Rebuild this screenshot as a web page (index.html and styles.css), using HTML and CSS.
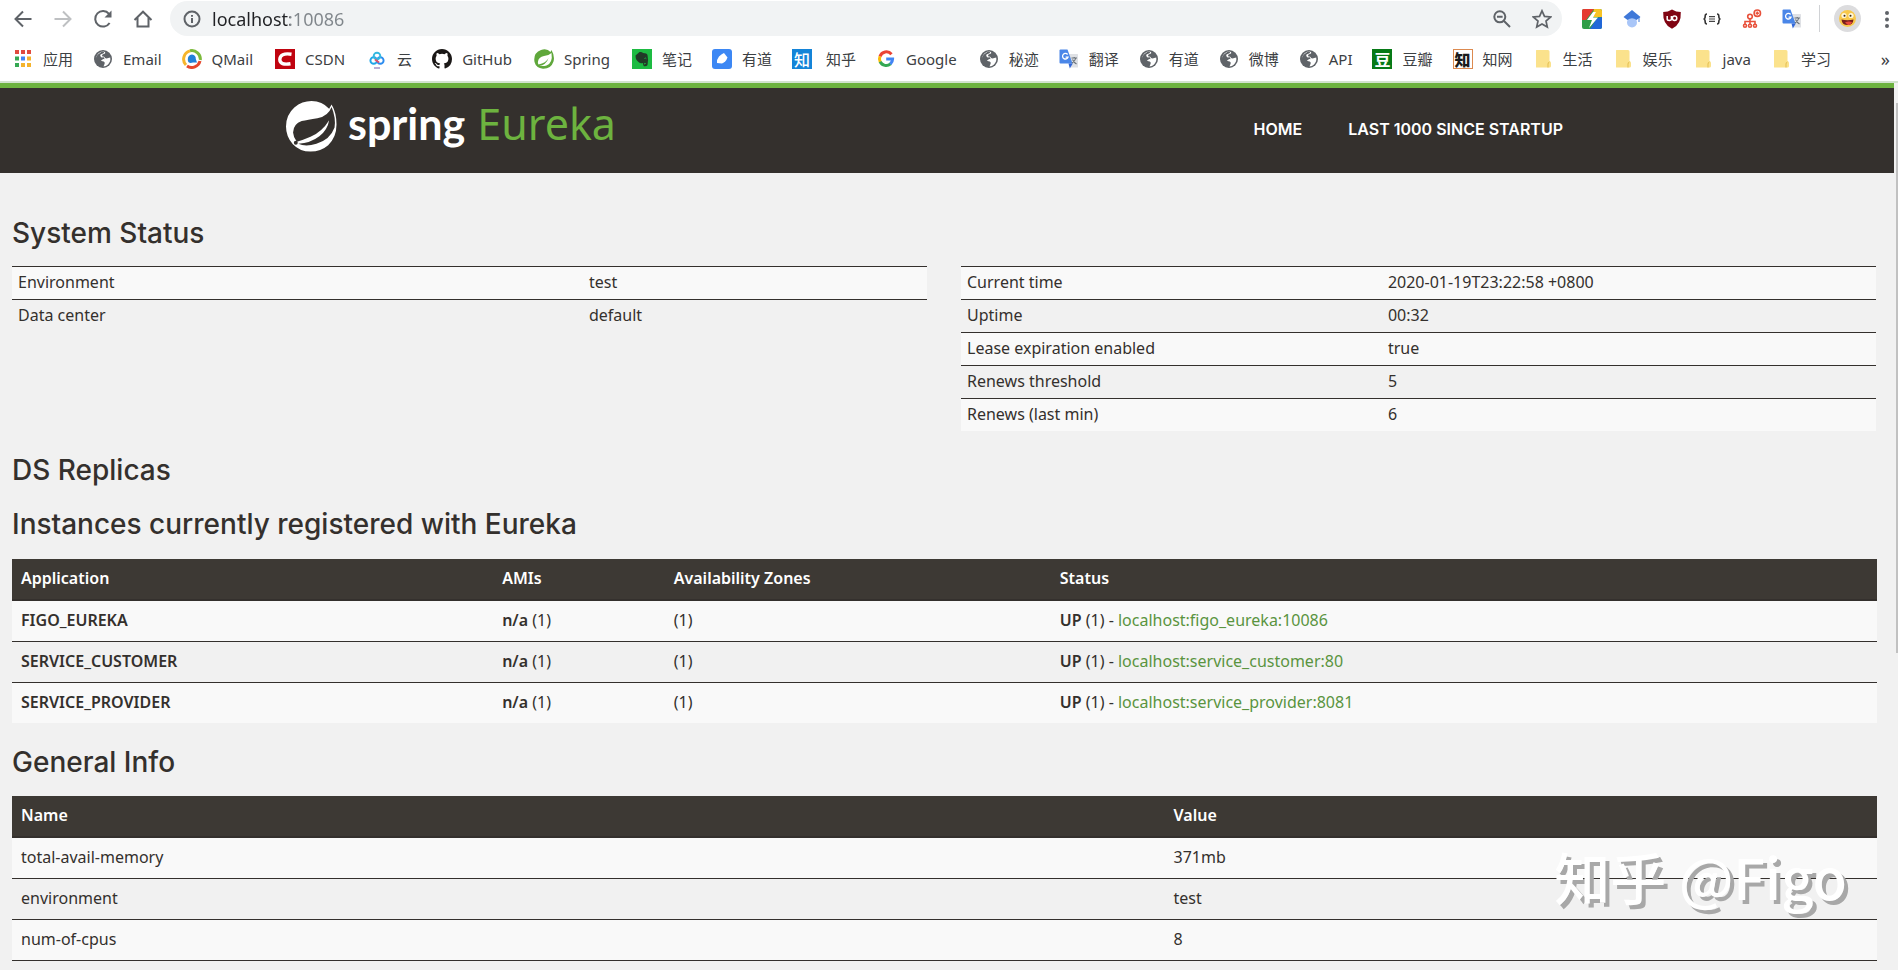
FILE: index.html
```html
<!DOCTYPE html>
<html lang="en">
<head>
<meta charset="utf-8">
<title>Eureka</title>
<link rel="stylesheet" href="styles.css">
</head>
<body>
<svg class="defs" aria-hidden="true">
  <symbol id="globe" viewBox="0 0 20 20"><circle cx="10" cy="10" r="9" fill="#5f6368"/><path d="M4 6.500Q6 2.800 10 2.500Q13 2.800 12 4.500L9.500 5.500Q8.500 6.500 9.500 7.500Q12 7 12 9Q13.500 10 17.200 8.600Q18 12.500 15 15.500Q13 17.500 10.500 17.500L11.500 15Q12.500 12.600 9.500 12.200Q7.500 12 7.800 10.200Q6 9 2.800 9Z" fill="#fff"/><path d="M2.800 9.500Q3 8 4.600 5.800L9 2.600Q12 3 10.600 4.200L7.500 5.600Q6.300 7.300 8.600 8.600L11 8.200L11.500 10.200Q9.500 9.800 9 11.200Q6 11.500 5 10.300Z" fill="#5f6368"/></symbol>
  <symbol id="folder" viewBox="0 0 20 20"><path d="M3 1.500Q3 1 3.500 1H15q1.500 0 1.500 1.500V12q1.500.500 1.500 2v3q0 1-1 1.500H3.500Q3 18.500 3 18Z" fill="#fbe28c"/><path d="M15 18.500V15q0-1.600 1.400-2" fill="none" stroke="#e3bd4e"/></symbol>
  <symbol id="translate" viewBox="0 0 20 20"><path d="M8 5h10.500q.500 0 .500.500V18q0 .500-.500.500H12Z" fill="#dfe1e5"/><path d="M1.500.500H8.500l5 14H1.500Q.500 14.500.500 13.500V1.500Q.500.500 1.500.500Z" fill="#4a86e8"/><path d="M9.500 14.500h4.300l-3 5Z" fill="#3367d6"/><path d="M8.600 5.500A2.800 2.800 0 1 0 9 8.200H6.600" fill="none" stroke="#fff" stroke-width="1.300"/><path d="M12.500 9H18M15.200 8V9M16.800 9Q16 12.500 13 14M13.500 10.500Q15 13.500 17.500 15" fill="none" stroke="#687078" stroke-width="1.100"/></symbol>
</svg>

<div class="browser">
  <div class="toolbar">
    <button class="tool" type="button" aria-label="Back"><svg viewBox="0 0 20 20"><path d="M18.500 10H3M10 2.500L2.500 10L10 17.500" class="ink"/></svg></button>
    <button class="tool tool-off" type="button" aria-label="Forward"><svg viewBox="0 0 20 20"><path d="M1.500 10H17M10 2.500L17.500 10L10 17.500" class="ink"/></svg></button>
    <button class="tool" type="button" aria-label="Reload"><svg viewBox="0 0 20 20"><path d="M16.600 14A7.800 7.800 0 1 1 16 4.800" class="ink"/><path d="M18.500 1.500V8.500H11.500Z" fill="#5f6368"/></svg></button>
    <button class="tool" type="button" aria-label="Home"><svg viewBox="0 0 20 20"><path d="M1.500 11L10 2.700L18.500 11M4.500 8.500V17.500H15.500V8.500" class="ink"/></svg></button>
    <div class="omnibox">
      <svg class="info" viewBox="0 0 20 20" aria-hidden="true"><circle cx="10" cy="10" r="7.500" class="ink"/><path d="M10 9V14M10 6V7.800" class="ink"/></svg>
      <input class="address" type="text" value="localhost:10086" aria-label="Address">
      <button class="tool" type="button" aria-label="Zoom"><svg viewBox="0 0 20 20"><circle cx="7.800" cy="7.800" r="5.500" class="ink"/><path d="M12 12L18 18M5 7.800H10.600" class="ink"/></svg></button>
      <button class="tool" type="button" aria-label="Bookmark"><svg viewBox="0 0 20 20"><path d="M10 1.800L12.500 7.400L18.600 8L14 12L15.300 18L10 14.900L4.700 18L6 12L1.400 8L7.500 7.400Z" fill="none" stroke="#5f6368" stroke-width="1.700"/></svg></button>
    </div>
    <div class="extensions">
      <button class="tool" type="button" aria-label="Lightning"><svg viewBox="0 0 20 20"><rect width="20" height="20" rx="2" fill="#2f9e48"/><path d="M0 11V2Q0 0 2 0H12L4 11Z" fill="#e53a30"/><path d="M12 0H18Q20 0 20 2V8H10Z" fill="#f7c325"/><path d="M20 8V18Q20 20 18 20H8L15 9Z" fill="#2167d8"/><path d="M11 3L5 11H10L7 19L16 8.500H11L14 3Z" fill="#fff"/></svg></button>
      <button class="tool" type="button" aria-label="Scholar"><svg viewBox="0 0 20 20"><circle cx="10" cy="13.500" r="5" fill="#a9c6f8"/><path d="M10 1L18.500 8L14.500 11Q10 7.500 5.500 11L1.500 8Z" fill="#3f78d8"/><path d="M17 8V13" stroke="#3f78d8"/></svg></button>
      <button class="tool" type="button" aria-label="Shield"><svg viewBox="0 0 20 20"><path d="M10 .500Q14 3 18.800 3Q19.500 15.500 10 19.800Q.500 15.500 1.200 3Q6 3 10 .500Z" fill="#800412"/><path d="M5.200 7V10.300Q5.200 11.500 7.300 11.500T9.400 10.300V7" fill="none" stroke="#fff" stroke-width="1.500"/><circle cx="12.600" cy="9.200" r="2.200" fill="none" stroke="#fff" stroke-width="1.500"/></svg></button>
      <button class="tool" type="button" aria-label="JSON"><svg viewBox="0 0 20 20"><path d="M5 5Q3.200 5 3.200 7Q3.200 10 1.500 10Q3.200 10 3.200 13Q3.200 15 5 15M15 5Q16.800 5 16.800 7Q16.800 10 18.500 10Q16.800 10 16.800 13Q16.800 15 15 15" fill="none" stroke="#333" stroke-width="1.600"/><path d="M7 7.700H13M7 10H13M7 12.300H13" stroke="#444" stroke-width="1.200"/></svg></button>
      <button class="tool" type="button" aria-label="Sitemap"><svg viewBox="0 0 20 20"><g fill="none" stroke="#e8503a" stroke-width="1.600"><circle cx="8" cy="7.500" r="2.300"/><path d="M8 10V15M3 15V12.500H13V15"/><circle cx="3" cy="16.700" r="1.500"/><circle cx="8" cy="16.700" r="1.500"/><circle cx="13" cy="16.700" r="1.500"/><circle cx="15.300" cy="4.200" r="3.200"/><path d="M15.300 2.600V5.800M13.700 4.200H16.900"/></g></svg></button>
      <button class="tool" type="button" aria-label="Translate"><svg><use href="#translate"/></svg></button>
    </div>
    <button class="avatar" type="button" aria-label="Profile"><svg viewBox="0 0 27 27"><circle cx="13.500" cy="13.500" r="13.500" fill="#dcdcde"/><circle cx="13.500" cy="13.500" r="8.500" fill="#f8c84b"/><circle cx="10" cy="10.500" r="2.600" fill="#fff6d8"/><circle cx="17" cy="10.500" r="2.600" fill="#fff6d8"/><circle cx="10.500" cy="10.800" r="1" fill="#3b2a1a"/><circle cx="16.500" cy="10.800" r="1" fill="#3b2a1a"/><path d="M7.500 14.500Q13.500 16 19.500 14.500Q19 20 13.500 20T7.500 14.500Z" fill="#7a1f1c"/><path d="M11 17.500Q14 16 18 17Q17 20.500 14 20Z" fill="#e8483c"/></svg></button>
    <button class="menu" type="button" aria-label="Menu"><svg viewBox="0 0 6 20"><g fill="#5f6368"><circle cx="3" cy="4" r="2"/><circle cx="3" cy="10.500" r="2"/><circle cx="3" cy="17" r="2"/></g></svg></button>
  </div>

  <nav class="bookmarks" aria-label="Bookmarks">
    <a class="mark" href="#"><svg viewBox="0 0 20 20"><path d="M2 1h4v4h-4zM8 1h4v4h-4zM14 1h4v4h-4z" fill="#e04a3f"/><path d="M2 7.500h4v4h-4z" fill="#35a853"/><path d="M8 7.500h4v4h-4z" fill="#4285f4"/><path d="M14 7.500h4v4h-4zM14 14h4v4h-4zM8 14h4v4h-4z" fill="#f4b32c"/><path d="M2 14h4v4h-4z" fill="#35a853"/></svg>应用</a>
    <a class="mark" href="#"><svg><use href="#globe"/></svg>Email</a>
    <a class="mark mark-latin" href="#"><svg viewBox="0 0 20 20"><g fill="none" stroke-width="3"><path d="M8 1.800A8.500 8.500 0 0 1 18.300 11" stroke="#7cba3b"/><path d="M18 12A8.500 8.500 0 0 1 5 17" stroke="#e5472d"/><path d="M4 16A8.500 8.500 0 0 1 8 1.900" stroke="#f6b52c"/></g><path d="M10 5.500Q14 6 13.800 10L15 13.500H11Q6 15 5.800 11Q5.500 6 10 5.500Z" fill="#2180d8"/></svg>QMail</a>
    <a class="mark mark-latin" href="#"><svg viewBox="0 0 20 20"><path d="M0 0H20V20H0Z" fill="#c00410"/><path d="M16.500 5.200Q5 3.500 4.800 10.500Q5 16.500 15.500 14.700" fill="none" stroke="#fff" stroke-width="3.400"/></svg>CSDN</a>
    <a class="mark" href="#"><svg viewBox="0 0 20 20"><g fill="none" stroke-width="1.900"><circle cx="6.700" cy="11.500" r="3.300" stroke="#20a6e8"/><circle cx="13.300" cy="11.500" r="3.300" stroke="#2b8cf0"/><circle cx="10" cy="7" r="3.300" stroke="#35b8e0"/><path d="M8 10.500L12 13.500" stroke="#e0506a"/><path d="M7 19H13" stroke="#8a7ab8" stroke-width="1.200"/></g></svg>云</a>
    <a class="mark mark-latin" href="#"><svg viewBox="0 0 16 16"><path fill="#1b1817" d="M8 0C3.580 0 0 3.580 0 8c0 3.540 2.290 6.530 5.470 7.590.4.070.55-.17.55-.38 0-.19-.01-.82-.01-1.490-2.010.37-2.530-.49-2.690-.94-.09-.23-.48-.94-.82-1.130-.28-.15-.68-.52-.01-.53.63-.01 1.080.58 1.230.82.72 1.210 1.870.87 2.330.66.07-.52.28-.87.51-1.070-1.780-.2-3.640-.89-3.640-3.950 0-.87.31-1.590.82-2.150-.08-.2-.36-1.020.08-2.120 0 0 .67-.21 2.200.82a7.600 7.600 0 0 1 4 0c1.530-1.040 2.200-.82 2.200-.82.44 1.100.16 1.920.08 2.120.51.56.82 1.270.82 2.150 0 3.070-1.870 3.750-3.650 3.950.29.25.54.73.54 1.480 0 1.070-.01 1.930-.01 2.200 0 .21.15.46.55.38A8 8 0 0 0 16 8c0-4.420-3.580-8-8-8Z"/></svg>GitHub</a>
    <a class="mark mark-latin" href="#"><svg viewBox="0 0 20 20"><path d="M17.500 1Q21 7 19.500 12.500Q17 20 9 19.800Q2 19 .500 13Q-1 4 7 1Q13-1 16.500 3Z" fill="#5fa73b"/><path d="M17.500 4Q15 6.500 10 7Q4.500 8 4 12.500Q3.500 14 4.500 15.500Q7 18 12.500 16.500Q19 14 17.500 4Z" fill="#fff"/><path d="M4.500 15.500Q12 14 14.500 9Q12.500 16 4.500 17Z" fill="#5fa73b"/></svg>Spring</a>
    <a class="mark" href="#"><svg viewBox="0 0 20 20"><path d="M0 0H20V20H0Z" fill="#1dbb42"/><path d="M3.500 6.500L7.500 3Q10 2.500 11 4Q15 4 15.500 6Q16.500 10 15.500 16Q15 17.500 12 17.300Q10.500 16 11 14Q8.500 15 6.500 13Q3.500 11 3.500 6.500Z" fill="#223a28"/><path d="M12.500 9.500Q13.500 8.500 14.300 9.700M13.700 14.500Q12 13.800 12.200 15.500" fill="none" stroke="#1dbb42"/></svg>笔记</a>
    <a class="mark" href="#"><svg viewBox="0 0 20 20"><rect width="20" height="20" rx="3" fill="#3c87f4"/><path d="M5 14Q4.500 10.500 7 7.500Q10 4.500 12 4L15.500 8.500Q14 13 10 14.500Z" fill="#fff"/></svg>有道</a>
    <a class="mark mark-wide" href="#"><span class="tile tile-blue" aria-hidden="true">知</span>知乎</a>
    <a class="mark mark-latin" href="#"><svg viewBox="0 0 20 20"><g fill="none" stroke-width="3"><path d="M15.500 5.200A6.700 6.700 0 0 0 4 7.500" stroke="#ea4335"/><path d="M4 7.300A6.700 6.700 0 0 0 4.200 13" stroke="#fbbc05"/><path d="M4.100 12.800A6.700 6.700 0 0 0 14.500 14.800" stroke="#34a853"/><path d="M14.300 15A6.700 6.700 0 0 0 16.600 10H10.200" stroke="#4285f4"/></g></svg>Google</a>
    <a class="mark" href="#"><svg><use href="#globe"/></svg>秘迹</a>
    <a class="mark" href="#"><svg><use href="#translate"/></svg>翻译</a>
    <a class="mark" href="#"><svg><use href="#globe"/></svg>有道</a>
    <a class="mark" href="#"><svg><use href="#globe"/></svg>微博</a>
    <a class="mark" href="#"><svg><use href="#globe"/></svg>API</a>
    <a class="mark" href="#"><span class="tile tile-green" aria-hidden="true">豆</span>豆瓣</a>
    <a class="mark" href="#"><span class="tile tile-orange" aria-hidden="true">知</span>知网</a>
    <a class="mark" href="#"><svg><use href="#folder"/></svg>生活</a>
    <a class="mark" href="#"><svg><use href="#folder"/></svg>娱乐</a>
    <a class="mark" href="#"><svg><use href="#folder"/></svg>java</a>
    <a class="mark" href="#"><svg><use href="#folder"/></svg>学习</a>
    <button class="more" type="button" aria-label="More bookmarks">»</button>
  </nav>
</div>

<div class="page">
  <header class="header">
    <div class="header-inner">
      <a class="brand" href="#">
        <svg viewBox="0 0 52 52" aria-hidden="true"><path d="M46.500 3.500Q51.500 12 51.500 24Q51.500 37 43 45Q35.500 51.500 25 51.500Q14 51.500 7 44Q0 36.500 0 26Q0 14 8.500 6.500Q16.500 0 26 0Q37 0 44 8Z" fill="#fff"/><path d="M46.500 6Q43 15.500 32 17.500Q22 19 16 20.500Q7.500 23.500 7.200 32Q7.500 37 11 41.500Q17 40 25 36.500Q37 31 44 19.500Q42.500 29 34 36Q25 43 12.500 43.500Q20 47 31 43.500Q45 39.500 49.500 27Q51 17 46.500 6Z" fill="#34302d"/><circle cx="10" cy="42.500" r="2" fill="#34302d"/></svg>
        <span class="brand-spring">spring</span>
        <span class="brand-eureka">Eureka</span>
      </a>
      <nav class="links">
        <a href="#">HOME</a>
        <a href="#">LAST 1000 SINCE STARTUP</a>
      </nav>
    </div>
  </header>

  <main class="content">
    <section>
      <h1>System Status</h1>
      <div class="status">
        <table class="facts facts-env">
          <tr><td>Environment</td><td>test</td></tr>
          <tr><td>Data center</td><td>default</td></tr>
        </table>
        <table class="facts facts-run">
          <tr><td>Current time</td><td>2020-01-19T23:22:58 +0800</td></tr>
          <tr><td>Uptime</td><td>00:32</td></tr>
          <tr><td>Lease expiration enabled</td><td>true</td></tr>
          <tr><td>Renews threshold</td><td>5</td></tr>
          <tr><td>Renews (last min)</td><td>6</td></tr>
        </table>
      </div>
    </section>

    <section>
      <h1>DS Replicas</h1>
    </section>

    <section>
      <h1>Instances currently registered with Eureka</h1>
      <table class="grid grid-instances">
        <thead><tr><th>Application</th><th>AMIs</th><th>Availability Zones</th><th>Status</th></tr></thead>
        <tbody>
          <tr><td><b>FIGO_EUREKA</b></td><td><b>n/a</b> (1)</td><td>(1)</td><td><b>UP</b> (1) - <a href="#">localhost:figo_eureka:10086</a></td></tr>
          <tr><td><b>SERVICE_CUSTOMER</b></td><td><b>n/a</b> (1)</td><td>(1)</td><td><b>UP</b> (1) - <a href="#">localhost:service_customer:80</a></td></tr>
          <tr><td><b>SERVICE_PROVIDER</b></td><td><b>n/a</b> (1)</td><td>(1)</td><td><b>UP</b> (1) - <a href="#">localhost:service_provider:8081</a></td></tr>
        </tbody>
      </table>
    </section>

    <section>
      <h1>General Info</h1>
      <table class="grid grid-general">
        <thead><tr><th>Name</th><th>Value</th></tr></thead>
        <tbody>
          <tr><td>total-avail-memory</td><td>371mb</td></tr>
          <tr><td>environment</td><td>test</td></tr>
          <tr><td>num-of-cpus</td><td>8</td></tr>
          <tr><td></td><td></td></tr>
        </tbody>
      </table>
    </section>
  </main>
  <div class="scroll-thumb"></div>
  <div class="watermark">知乎 @Figo</div>
</div>
</body>
</html>
```

FILE: styles.css
```css
* { box-sizing: border-box; }

body {
  margin: 0;
  height: 100vh;
  display: flex;
  flex-direction: column;
  overflow: hidden;
  background: #f1f1f1;
  color: #34302d;
  font: 16px/22px "Noto Sans", "Noto Sans CJK SC", sans-serif;
}

.defs { display: none; }

button {
  border: 0;
  padding: 0;
  background: none;
  color: inherit;
  font: inherit;
}

a { text-decoration: none; }

/* Browser chrome */
.browser {
  flex: none;
  background: #fff;
  border-bottom: 2px solid #d3e3cf;
}

.toolbar {
  display: flex;
  align-items: center;
  height: 37px;
  padding: 0 8px 0 13px;
}

.tool {
  width: 20px;
  height: 20px;
  margin-right: 20px;
  flex: none;
}

.toolbar > .tool:nth-child(4) { margin-right: 17px; }

.tool svg,
.avatar svg,
.menu svg {
  display: block;
  width: 100%;
  height: 100%;
}

.tool-off { opacity: 0.4; }

.ink {
  fill: none;
  stroke: #5f6368;
  stroke-width: 2;
}

.omnibox {
  flex: 1;
  display: flex;
  align-items: center;
  height: 35px;
  margin-right: 20px;
  padding-left: 12px;
  border-radius: 18px;
  background: #f1f3f4;
}

.omnibox .tool:last-child { margin-right: 10px; }

.info {
  width: 20px;
  height: 20px;
  margin-right: 10px;
}

.address {
  flex: 1;
  border: 0;
  padding: 0;
  background: linear-gradient(90deg, #202124 78px, #80868b 78px);
  background-clip: text;
  -webkit-background-clip: text;
  color: transparent;
  font: 18px/26px "Noto Sans", sans-serif;
}

.extensions { display: flex; }

.extensions .tool:last-child { margin-right: 17px; }

.avatar {
  width: 42px;
  height: 27px;
  padding: 0 0 0 14px;
  margin-right: 23px;
  border-left: 1px solid #d0d2d5;
}

.menu {
  width: 6px;
  height: 20px;
}

.bookmarks {
  display: flex;
  align-items: center;
  gap: 20px;
  height: 44px;
  padding: 0 8px 0 13px;
  color: #3c4043;
  font: 15px/22px "Noto Sans", "Noto Sans CJK SC", sans-serif;
}

.mark {
  display: flex;
  align-items: center;
  gap: 10px;
  flex: none;
  color: inherit;
}

.mark-latin { padding-right: 2px; }
.mark-wide { gap: 14px; }

.mark svg,
.tile {
  width: 20px;
  height: 20px;
}

.tile {
  display: flex;
  align-items: center;
  justify-content: center;
  color: #fff;
  font: 500 16px/24px "Noto Sans CJK SC", sans-serif;
}

.tile-blue { background: #1484d8; }
.tile-green { background: #077a17; font-weight: 700; }
.tile-orange { border: 1px solid #dc8a50; color: #1b1b1b; font-weight: 900; }

.more {
  margin-left: auto;
  font-size: 18px;
}

/* Dashboard */
.page {
  position: relative;
  flex: 1;
  min-height: 0;
  overflow: hidden;
}

.header {
  margin-right: 4px;
  border-top: 5px solid #6db33f;
  background: #34302d;
}

.header-inner {
  display: flex;
  justify-content: space-between;
  width: 1322px;
  max-width: 100%;
  height: 85px;
  margin: 0 auto;
}

.brand {
  display: flex;
  align-items: center;
  height: 76px;
  font-size: 43px;
  line-height: 50px;
}

.brand span { padding-bottom: 4px; }

.brand svg {
  width: 51px;
  height: 51px;
  margin-right: 11px;
}

.brand-spring {
  margin-right: 12px;
  color: #fff;
  font-family: Lato, sans-serif;
  font-weight: 700;
}

.brand-eureka { color: #6db33f; }

.links {
  display: flex;
  align-items: center;
  gap: 46px;
  height: 82px;
  padding-right: 45px;
  font: 600 16px/22px Inter, sans-serif;
}

.links a { color: #fff; }

.content {
  display: flex;
  flex-direction: column;
  gap: 24px;
  padding: 45px 21px 0 12px;
}

h1 {
  margin: 0;
  font: 500 28px/30px Inter, sans-serif;
}

table {
  width: 100%;
  border-spacing: 0;
  table-layout: fixed;
}

.status {
  display: grid;
  grid-template-columns: 1fr 1fr;
  align-items: start;
  gap: 34px;
  margin-top: 18px;
  padding-right: 1px;
}

td { border-top: 1px solid #34302d; }

tr:nth-child(odd) td { background: #f9f9f9; }

.facts td { padding: 4px 6px 6px; }
.facts-env td:first-child { width: 62.4%; }
.facts-run td:first-child { width: 46%; }

.grid { margin-top: 20px; }

.grid th,
.grid td {
  height: 40px;
  padding: 8px 9px 10px;
  text-align: left;
}

.grid th {
  border-bottom: 2px solid #34302d;
  background: #3d3934;
  color: #fff;
}

.grid tbody tr:first-child td { border-top: 0; }
.grid b, .grid th { font-weight: 600; }
.grid td a { color: #5a9440; }

.grid-instances th:nth-child(1) { width: 25.8%; }
.grid-instances th:nth-child(2) { width: 9.2%; }
.grid-instances th:nth-child(3) { width: 20.7%; }
.grid-general { margin-top: 19px; }
.grid-general th:first-child { width: 61.8%; }

.scroll-thumb {
  position: absolute;
  top: 20px;
  right: 0;
  width: 2px;
  height: 62%;
  background: #c1c1c1;
}

.watermark {
  position: absolute;
  right: 51px;
  bottom: 59px;
  color: #fff;
  font: 500 56px/70px "Noto Sans CJK SC", sans-serif;
  text-shadow: 4px 4px 0 #a8a8a8;
}
```
